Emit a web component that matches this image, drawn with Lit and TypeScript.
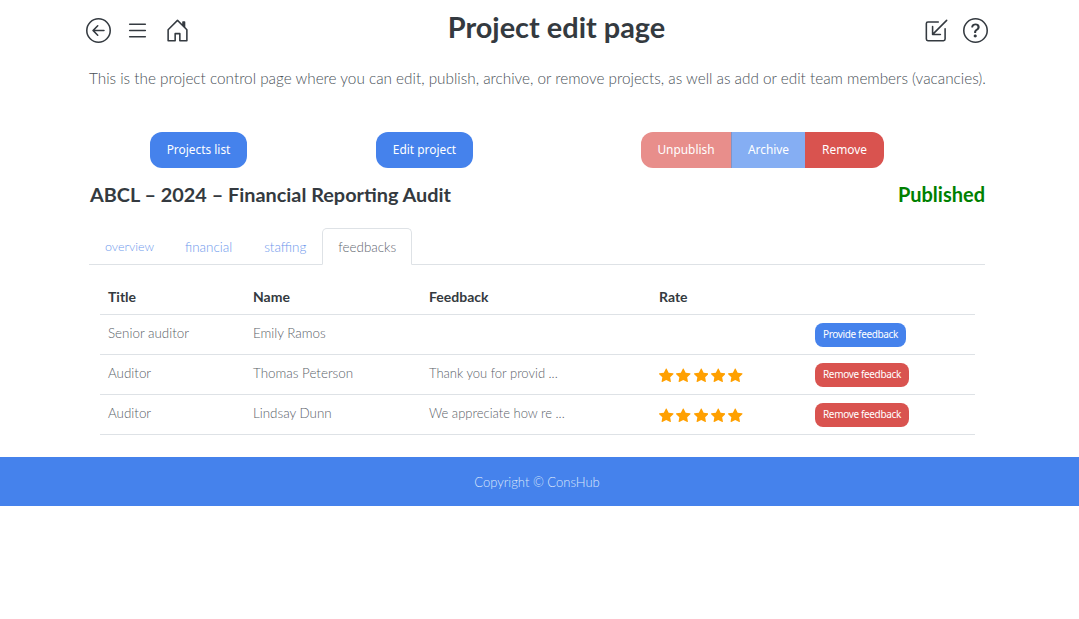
import { LitElement, html, css, svg } from "lit";
import { customElement } from "lit/decorators.js";

const icon = (paths: string[], size = 25) => html`<svg class="ic" width=${size} height=${size} viewBox="0 0 16 16" fill="currentColor">${paths.map((d) => svg`<path d=${d}></path>`)}</svg>`;

const BACK = ["M1 8a7 7 0 1 0 14 0A7 7 0 0 0 1 8zm15 0A8 8 0 1 1 0 8a8 8 0 0 1 16 0zm-4.5-.5a.5.5 0 0 1 0 1H5.707l2.147 2.146a.5.5 0 0 1-.708.708l-3-3a.5.5 0 0 1 0-.708l3-3a.5.5 0 1 1 .708.708L5.707 7.5H11.5z"];
const LIST = ["M2.5 12a.5.5 0 0 1 .5-.5h10a.5.5 0 0 1 0 1H3a.5.5 0 0 1-.5-.5zm0-4a.5.5 0 0 1 .5-.5h10a.5.5 0 0 1 0 1H3a.5.5 0 0 1-.5-.5zm0-4a.5.5 0 0 1 .5-.5h10a.5.5 0 0 1 0 1H3a.5.5 0 0 1-.5-.5z"];
const HOUSE = ["M8.354 1.146a.5.5 0 0 0-.708 0l-6 6A.5.5 0 0 0 1.5 7.5v7a.5.5 0 0 0 .5.5h4.5a.5.5 0 0 0 .5-.5v-4h2v4a.5.5 0 0 0 .5.5H14a.5.5 0 0 0 .5-.5v-7a.5.5 0 0 0-.146-.354L13 5.793V2.5a.5.5 0 0 0-.5-.5h-1a.5.5 0 0 0-.5.5v1.293L8.354 1.146zM2.5 14V7.707l5.5-5.5 5.5 5.5V14H10v-4a.5.5 0 0 0-.5-.5h-3a.5.5 0 0 0-.5.5v4H2.5z"];
const EDIT = ["M9.636 2.5a.5.5 0 0 0-.5-.5H2.5A1.5 1.5 0 0 0 1 3.5v10A1.5 1.5 0 0 0 2.5 15h10a1.5 1.5 0 0 0 1.5-1.5V6.864a.5.5 0 0 0-1 0V13.5a.5.5 0 0 1-.5.5h-10a.5.5 0 0 1-.5-.5v-10a.5.5 0 0 1 .5-.5h6.636a.5.5 0 0 0 .5-.5z", "M5 10.5a.5.5 0 0 0 .5.5h5a.5.5 0 0 0 0-1H6.707l8.147-8.146a.5.5 0 0 0-.708-.708L6 9.293V5.5a.5.5 0 0 0-1 0v5z"];
const HELP = ["M8 15A7 7 0 1 1 8 1a7 7 0 0 1 0 14zm0 1A8 8 0 1 0 8 0a8 8 0 0 0 0 16z", "M5.255 5.786a.237.237 0 0 0 .241.247h.825c.138 0 .248-.113.266-.25.09-.656.54-1.134 1.342-1.134.686 0 1.314.343 1.314 1.168 0 .635-.374.927-.965 1.371-.673.489-1.206 1.06-1.168 1.987l.003.217a.25.25 0 0 0 .25.246h.811a.25.25 0 0 0 .25-.25v-.105c0-.718.273-.927 1.01-1.486.609-.463 1.244-.977 1.244-2.056 0-1.511-1.276-2.241-2.673-2.241-1.267 0-2.655.59-2.75 2.286zm1.557 5.763c0 .533.425.927 1.01.927.609 0 1.028-.394 1.028-.927 0-.552-.42-.94-1.029-.94-.584 0-1.009.388-1.009.94z"];
const STAR = "M3.612 15.443c-.386.198-.824-.149-.746-.592l.83-4.73L.173 6.765c-.329-.314-.158-.888.283-.95l4.898-.696L7.538.792c.197-.39.73-.39.927 0l2.184 4.327 4.898.696c.441.062.612.636.282.95l-3.522 3.356.83 4.73c.078.443-.36.79-.746.592L8 13.187l-4.389 2.256z";

const ROWS = [
  { title: "Senior auditor", name: "Emily Ramos", feedback: "", stars: 0, action: "Provide feedback", kind: "blue" },
  { title: "Auditor", name: "Thomas Peterson", feedback: "Thank you for provid ...", stars: 5, action: "Remove feedback", kind: "red" },
  { title: "Auditor", name: "Lindsay Dunn", feedback: "We appreciate how re ...", stars: 5, action: "Remove feedback", kind: "red" },
];

@customElement("app-root")
export class AppRoot extends LitElement {
  static styles = css`
    :host { display: block; background: #fff; color: #343a40; font-family: "Lato", "Noto Sans", sans-serif; font-weight: 300; font-size: 14px; }
    * { box-sizing: border-box; }
    .ic { display: block; }
    .header { display: flex; justify-content: space-between; align-items: flex-start; padding: 18px 91px 0 86px; height: 44px; }
    .icons { display: flex; gap: 14px; }
    .icons .ic:nth-child(3) { transform: translateX(1px); }
    h1 { margin: 0; font: 700 28.9px/36px "Lato", sans-serif; color: #343a40; position: relative; top: -9px; }
    .lead { margin: 0 94px 0 89px; padding-top: 22px; text-align: center; font-size: 15.3px; line-height: 24px; color: #495057; height: 88px; white-space: nowrap; }
    .actions { display: flex; align-items: center; height: 36px; padding-left: 61px; margin-left: 89px; width: 896px; }
    .btn { display: block; width: 97px; height: 36px; padding: 0 0 2px; border: 0; border-radius: 12px; background: #4582ec; color: #fff; font: 400 11.9px/34px "Noto Sans", sans-serif; }
    .edit { margin-left: 129px; }
    .group { display: flex; margin-left: 168px; border-radius: 12px; overflow: hidden; }
    .group .btn { border-radius: 0; }
    .group .unpub { background: #e88e8b; width: 91px; border-right: 1px solid #7f94c8; }
    .group .arch { background: #85aef3; width: 73px; }
    .group .rem { background: #d9534f; width: 79px; }
    .main { margin: 0 94px 0 89px; }
    .status { display: flex; justify-content: space-between; align-items: center; height: 54px; padding: 0 0 3px 1px; font: 700 19.85px/26px "Lato", sans-serif; color: #343a40; }
    .pub { color: #008000; font-size: 20px; }
    .tabs { display: flex; height: 37px; border-bottom: 1px solid #dee2e6; margin-top: 6px; }
    .tab { height: 36px; padding: 0 15px; border: 1px solid transparent; font-size: 13.4px; line-height: 36px; color: #6d98ec; }
    .tab.over { font-size: 12.5px; padding: 0 14px 0 15px; }
    .tab.active { height: 37px; color: #5f6770; background: #fff; border-color: #dee2e6 #dee2e6 #fff; border-radius: 5px 5px 0 0; }
    table { border-collapse: collapse; table-layout: fixed; width: 875px; margin: 16px 0 0 11px; font-size: 13.4px; }
    th { height: 33px; padding: 0 8px; font: 700 14px/20px "Lato", sans-serif; text-align: left; color: #343a40; border-bottom: 1px solid #dee2e6; }
    td { height: 40px; padding: 0 8px 2px; color: #5a6168; border-bottom: 1px solid #dee2e6; vertical-align: middle; white-space: nowrap; }
    td.fb { font-size: 13px; }
    td.rate, td.act { padding: 2px 8px 0; }
    .stars { display: flex; gap: 2.8px; color: #ffa000; }
    .mini { display: inline-block; height: 24px; padding: 0 8px; border-radius: 8px; color: #fff; font: 400 10px/23px "Noto Sans", sans-serif; letter-spacing: -0.35px; vertical-align: middle; }
    .mini.blue { background: #4582ec; }
    .mini.red { background: #d9534f; }
    footer { margin-top: 22px; height: 49px; padding-right: 5px; background: #4582ec; color: #dbe6fb; text-align: center; font-size: 13px; line-height: 50px; }
  `;

  render() {
    return html`
      <div class="header">
        <div class="icons">${icon(BACK)}${icon(LIST)}${icon(HOUSE)}</div>
        <h1>Project edit page</h1>
        <div class="icons">${icon(EDIT)}${icon(HELP)}</div>
      </div>
      <p class="lead">This is the project control page where you can edit, publish, archive, or remove projects, as well as add or edit team members (vacancies).</p>
      <div class="actions">
        <button class="btn">Projects list</button>
        <button class="btn edit">Edit project</button>
        <div class="group">
          <button class="btn unpub">Unpublish</button>
          <button class="btn arch">Archive</button>
          <button class="btn rem">Remove</button>
        </div>
      </div>
      <div class="main">
        <div class="status"><span>ABCL – 2024 – Financial Reporting Audit</span><span class="pub">Published</span></div>
        <div class="tabs">
          <div class="tab over">overview</div>
          <div class="tab">financial</div>
          <div class="tab">staffing</div>
          <div class="tab active">feedbacks</div>
        </div>
        <table>
          <colgroup><col style="width:145px" /><col style="width:176px" /><col style="width:230px" /><col style="width:156px" /><col /></colgroup>
          <thead><tr><th>Title</th><th>Name</th><th>Feedback</th><th>Rate</th><th></th></tr></thead>
          <tbody>
            ${ROWS.map((r) => html`<tr>
              <td>${r.title}</td>
              <td>${r.name}</td>
              <td class="fb">${r.feedback}</td>
              <td class="rate">${r.stars ? html`<div class="stars">${Array.from({ length: r.stars }, () => icon([STAR], 14.5))}</div>` : ""}</td>
              <td class="act"><span class="mini ${r.kind}">${r.action}</span></td>
            </tr>`)}
          </tbody>
        </table>
      </div>
      <footer>Copyright © ConsHub</footer>
    `;
  }
}
